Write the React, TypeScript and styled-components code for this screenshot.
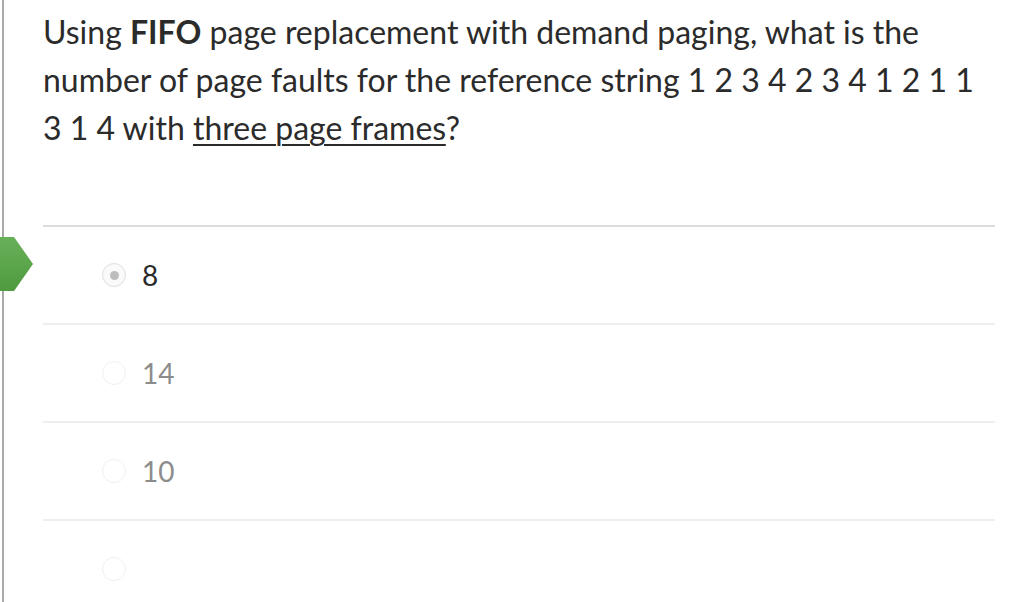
import styled, { createGlobalStyle } from 'styled-components'

const Global = createGlobalStyle`
    html, body {
        margin: 0;
        padding: 0;
        background: #ffffff;
    }
    body {
        font-family: Lato, 'Open Sans', sans-serif;
        color: #2b2b2b;
    }
`

const Page = styled.div`
    margin-left: 2px;
    border-left: 2px solid #a9a9a9;
    min-height: 602px;
    box-sizing: border-box;
    padding: 8px 31px 0 39px;
`

const Question = styled.div`
    font-size: 32px;
    line-height: 48px;
    margin-bottom: 73px;
    padding-right: 16px;

    b {
        font-weight: 700;
    }
    u {
        text-decoration-thickness: 2px;
        text-underline-offset: 4px;
    }
`

const Answers = styled.div`
    display: flex;
    flex-direction: column;
`

const Row = styled.label<{ $first?: boolean }>`
    position: relative;
    display: flex;
    align-items: center;
    gap: 16px;
    height: 96px;
    padding-left: 59px;
    border-top: 2px solid ${(p) => (p.$first ? '#dcdcdc' : '#eeeeee')};
`

const Radio = styled.span<{ $checked?: boolean }>`
    width: 24px;
    height: 24px;
    box-sizing: border-box;
    border-radius: 50%;
    border: 1.5px solid ${(p) => (p.$checked ? '#e0e0e0' : '#f0f0f0')};
    background: ${(p) => (p.$checked ? 'radial-gradient(circle, #fafafa 60%, #f0f0f0 100%)' : '#fff')};
    display: flex;
    align-items: center;
    justify-content: center;

    &::after {
        content: '';
        display: ${(p) => (p.$checked ? 'block' : 'none')};
        width: 9px;
        height: 9px;
        border-radius: 50%;
        background: #bdbdbd;
    }
`

const Label = styled.span<{ $muted?: boolean }>`
    font-size: 28px;
    color: ${(p) => (p.$muted ? '#8c8c8c' : '#2b2b2b')};
`

const Marker = styled.svg`
    position: absolute;
    left: -43px;
    top: 10px;
`

const options = [
    { text: '8', checked: true },
    { text: '14' },
    { text: '10' },
    { text: '' },
]

export default function App() {
    return (
        <>
            <Global />
            <Page>
                <Question>
                    Using <b>FIFO</b> page replacement with demand paging, what is the number of page
                    faults for the reference string 1 2 3 4 2 3 4 1 2 1 1 3 1 4 with{' '}
                    <u>three page frames</u>?
                </Question>
                <Answers>
                    {options.map((o, i) => (
                        <Row key={i} $first={i === 0}>
                            {o.checked && (
                                <Marker width="34" height="55" viewBox="0 0 34 55">
                                    <defs>
                                        <linearGradient id="mk" x1="0" y1="0" x2="0" y2="1">
                                            <stop offset="0" stopColor="#69b159" />
                                            <stop offset="1" stopColor="#4e9a3f" />
                                        </linearGradient>
                                    </defs>
                                    <polygon points="0,0 14,0 33,27 14,54 0,54" fill="url(#mk)" />
                                </Marker>
                            )}
                            <Radio $checked={o.checked} />
                            <Label $muted={!o.checked}>{o.text}</Label>
                        </Row>
                    ))}
                </Answers>
            </Page>
        </>
    )
}
